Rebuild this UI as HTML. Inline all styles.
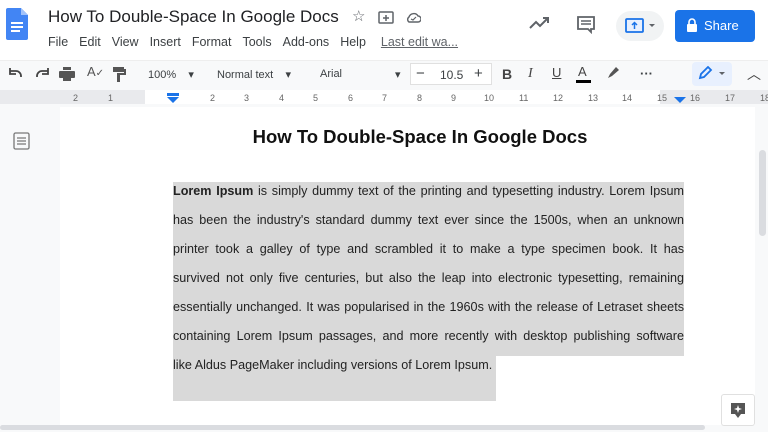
<!DOCTYPE html>
<html><head><meta charset="utf-8"><style>
*{margin:0;padding:0;box-sizing:border-box}
body{width:768px;height:432px;overflow:hidden;background:#f8f9fa;font-family:"Liberation Sans",Arial,sans-serif;position:relative;color:#3c4043}
.abs{position:absolute}
.menu span{margin-right:11px}
.tb{font-size:11px;color:#3c4043}
.doc{position:absolute;left:60px;top:107px;width:695px;height:318px;background:#fff}
.line{position:absolute;left:173px;width:511px;font-size:12.6px;color:#222;text-align:justify;text-align-last:justify;white-space:nowrap}
.rn{position:absolute;top:93px;font-size:9px;color:#666}
</style></head><body>
<div class="abs" style="left:0;top:0;width:768px;height:60px;background:#fff"></div>
<svg class="abs" style="left:6px;top:8px" width="22" height="32" viewBox="0 0 22 32"><path d="M2 0h13l7 7v23a2 2 0 0 1-2 2H2a2 2 0 0 1-2-2V2a2 2 0 0 1 2-2z" fill="#4285f4"/><path d="M15 0v7h7z" fill="#a1c2fa"/><rect x="5" y="14" width="12" height="2" fill="#fff"/><rect x="5" y="18" width="12" height="2" fill="#fff"/><rect x="5" y="22" width="9" height="2" fill="#fff"/></svg>
<div class="abs" style="left:48px;top:7px;font-size:17px;color:#202124">How To Double-Space In Google Docs</div>
<div class="abs" style="left:352px;top:7px;font-size:15px;color:#5f6368">☆</div>
<svg class="abs" style="left:378px;top:10px" width="16" height="14"><rect x="1" y="2" width="14" height="11" rx="1" fill="none" stroke="#5f6368" stroke-width="1.5"/><path d="M8 5v6M5 8h6" stroke="#5f6368" stroke-width="1.5"/></svg>
<svg class="abs" style="left:405px;top:10px" width="16" height="14"><path d="M4 12h9a3 3 0 0 0 0-6 5 5 0 0 0-9 1 3 3 0 0 0 0 5z" fill="none" stroke="#5f6368" stroke-width="1.4"/><path d="M6 9l2 1 3-3" fill="none" stroke="#5f6368" stroke-width="1.2"/></svg>
<div class="abs menu" style="left:48px;top:35px;font-size:12.5px;color:#3c4043;white-space:nowrap"><span>File</span><span>Edit</span><span>View</span><span>Insert</span><span>Format</span><span>Tools</span><span>Add-ons</span><span>Help</span><span style="margin-left:4px;text-decoration:underline;color:#5f6368">Last edit wa...</span></div>
<svg class="abs" style="left:529px;top:16px" width="22" height="14"><path d="M1 12l6-6 4 4 8-8M14 2h5v5" fill="none" stroke="#5f6368" stroke-width="2"/></svg>
<svg class="abs" style="left:576px;top:15px" width="20" height="19"><path d="M2 2h16v12h-3v3l-3-3H2z" fill="none" stroke="#5f6368" stroke-width="1.8"/><path d="M5 6h10M5 9h10" stroke="#5f6368" stroke-width="1.5"/></svg>
<div class="abs" style="left:616px;top:11px;width:48px;height:30px;border-radius:15px;background:#f1f3f4"></div>
<svg class="abs" style="left:625px;top:18px" width="36" height="16"><rect x="1" y="1" width="17" height="13" rx="1" fill="#e8f0fe" stroke="#1a73e8" stroke-width="1.8"/><path d="M9.5 11V5M7 7l2.5-2.5L12 7" stroke="#1a73e8" stroke-width="1.5" fill="none"/><path d="M24 6l3 3 3-3z" fill="#5f6368"/></svg>
<div class="abs" style="left:675px;top:10px;width:80px;height:32px;border-radius:4px;background:#1a73e8;color:#fff;font-size:13px;line-height:32px;padding-left:29px">Share</div>
<svg class="abs" style="left:686px;top:18px" width="12" height="14"><rect x="1" y="6" width="10" height="8" rx="1" fill="#fff"/><path d="M3 6V4a3 3 0 0 1 6 0v2" fill="none" stroke="#fff" stroke-width="1.6"/></svg>
<div class="abs" style="left:0;top:60px;width:768px;height:30px;background:#f8f9fa;border-top:1px solid #eee"></div>
<svg class="abs" style="left:7px;top:67px" width="44" height="12"><path d="M3 4h6a5 5 0 0 1 5 5v1M3 1v6h6" fill="none" stroke="#444" stroke-width="1.8" transform="translate(0,0)"/><path d="M41 4h-6a5 5 0 0 0-5 5v1M41 1v6h-6" fill="none" stroke="#444" stroke-width="1.8"/></svg>
<svg class="abs" style="left:59px;top:67px" width="16" height="14"><rect x="4" y="0" width="8" height="3" fill="#555"/><rect x="0" y="4" width="16" height="7" rx="1" fill="#555"/><rect x="4" y="9" width="8" height="5" fill="#555"/></svg>
<div class="abs" style="left:87px;top:64px;font-size:13px;color:#555">A<span style="font-size:10px">✓</span></div>
<svg class="abs" style="left:112px;top:67px" width="14" height="15"><rect x="1" y="0" width="11" height="5" fill="#555"/><rect x="12" y="2" width="2" height="5" fill="#555"/><rect x="5" y="6" width="9" height="2" fill="#555"/><rect x="5" y="7" width="3" height="8" fill="#555"/></svg>
<div class="abs tb" style="left:148px;top:68px">100%&nbsp;&nbsp;&nbsp;&nbsp;▾</div>
<div class="abs tb" style="left:217px;top:68px">Normal text&nbsp;&nbsp;&nbsp;&nbsp;▾</div>
<div class="abs tb" style="left:320px;top:68px">Arial</div>
<div class="abs tb" style="left:395px;top:68px">▾</div>
<div class="abs" style="left:410px;top:63px;width:82px;height:22px;border:1px solid #e0e0e0;background:#fff"></div>
<div class="abs tb" style="left:416px;top:65px;font-size:15px">−</div>
<div class="abs tb" style="left:440px;top:68px;font-size:12px">10.5</div>
<div class="abs tb" style="left:474px;top:65px;font-size:15px">+</div>
<div class="abs" style="left:502px;top:66px;font-size:14px;font-weight:bold;color:#444">B</div>
<div class="abs" style="left:528px;top:66px;font-size:14px;font-style:italic;font-family:'Liberation Serif',serif;color:#444">I</div>
<div class="abs" style="left:552px;top:65px;font-size:13px;text-decoration:underline;color:#444">U</div>
<div class="abs" style="left:578px;top:64px;font-size:13px;color:#444">A</div>
<div class="abs" style="left:576px;top:80px;width:15px;height:3px;background:#000"></div>
<svg class="abs" style="left:606px;top:66px" width="14" height="14"><path d="M2 12l2-4 6-7 3 3-7 6z" fill="#555"/></svg>
<div class="abs tb" style="left:640px;top:66px;font-size:13px;font-weight:bold">···</div>
<div class="abs" style="left:692px;top:62px;width:40px;height:24px;border-radius:4px;background:#e8f0fe"></div>
<svg class="abs" style="left:697px;top:66px" width="32" height="15"><path d="M3 12l1-4 7-7 3 3-7 7z" fill="none" stroke="#1a73e8" stroke-width="1.8"/><path d="M22 6l3 3 3-3z" fill="#5f6368"/></svg>
<div class="abs tb" style="left:747px;top:64px;font-size:14px;color:#444">︿</div>
<div class="abs" style="left:0;top:90px;width:768px;height:14px;background:#e9eaed"></div>
<div class="abs" style="left:145px;top:90px;width:515px;height:14px;background:#fff"></div>
<svg class="abs" style="left:166px;top:93px" width="14" height="10"><path d="M1 0h12v3H1z M1 4h12l-6 6z" fill="#1a73e8"/></svg>
<svg class="abs" style="left:674px;top:96px" width="12" height="8"><path d="M0 1h12l-6 6z" fill="#1a73e8"/></svg>
<div class="rn" style="left:73px">2</div><div class="rn" style="left:108px">1</div>
<div class="rn" style="left:210px">2</div><div class="rn" style="left:244px">3</div><div class="rn" style="left:279px">4</div><div class="rn" style="left:313px">5</div><div class="rn" style="left:348px">6</div><div class="rn" style="left:382px">7</div><div class="rn" style="left:417px">8</div><div class="rn" style="left:451px">9</div><div class="rn" style="left:484px">10</div><div class="rn" style="left:519px">11</div><div class="rn" style="left:553px">12</div><div class="rn" style="left:588px">13</div><div class="rn" style="left:622px">14</div><div class="rn" style="left:657px">15</div><div class="rn" style="left:690px">16</div><div class="rn" style="left:725px">17</div><div class="rn" style="left:760px">18</div>
<div class="doc"></div>
<svg class="abs" style="left:13px;top:132px" width="17" height="18"><rect x="1" y="1" width="15" height="16" rx="1.5" fill="none" stroke="#777" stroke-width="1.3"/><path d="M4 6h9M4 9h9M4 12h9" stroke="#777" stroke-width="1.2"/></svg>
<div class="abs" style="left:0;top:126px;width:840px;text-align:center;font-size:18.5px;font-weight:bold;color:#111">How To Double-Space In Google Docs</div>
<div class="abs" style="left:173px;top:182px;width:511px;height:174px;background:#d9d9d9"></div>
<div class="abs" style="left:173px;top:352px;width:323px;height:49px;background:#d9d9d9"></div>
<div class="line" style="top:184px"><b>Lorem Ipsum</b> is simply dummy text of the printing and typesetting industry. Lorem Ipsum</div>
<div class="line" style="top:213px">has been the industry's standard dummy text ever since the 1500s, when an unknown</div>
<div class="line" style="top:242px">printer took a galley of type and scrambled it to make a type specimen book. It has</div>
<div class="line" style="top:271px">survived not only five centuries, but also the leap into electronic typesetting, remaining</div>
<div class="line" style="top:300px">essentially unchanged. It was popularised in the 1960s with the release of Letraset sheets</div>
<div class="line" style="top:329px">containing Lorem Ipsum passages, and more recently with desktop publishing software</div>
<div class="line" style="top:358px;text-align-last:left;width:auto">like Aldus PageMaker including versions of Lorem Ipsum.</div>
<div class="abs" style="left:757px;top:107px;width:11px;height:320px;background:#f8f9fa"></div>
<div class="abs" style="left:759px;top:150px;width:7px;height:86px;border-radius:4px;background:#dadce0"></div>
<div class="abs" style="left:0;top:425px;width:705px;height:5px;border-radius:3px;background:#dadce0"></div>
<div class="abs" style="left:721px;top:394px;width:34px;height:32px;background:#fff;border:1px solid #e0e0e0;border-radius:3px"></div>
<svg class="abs" style="left:730px;top:402px" width="16" height="17"><path d="M1 1h14v11h-4l-3 4-3-4H1z" fill="#555"/><path d="M8 3l1 3 3 1-3 1-1 3-1-3-3-1 3-1z" fill="#fff"/></svg>
</body></html>
